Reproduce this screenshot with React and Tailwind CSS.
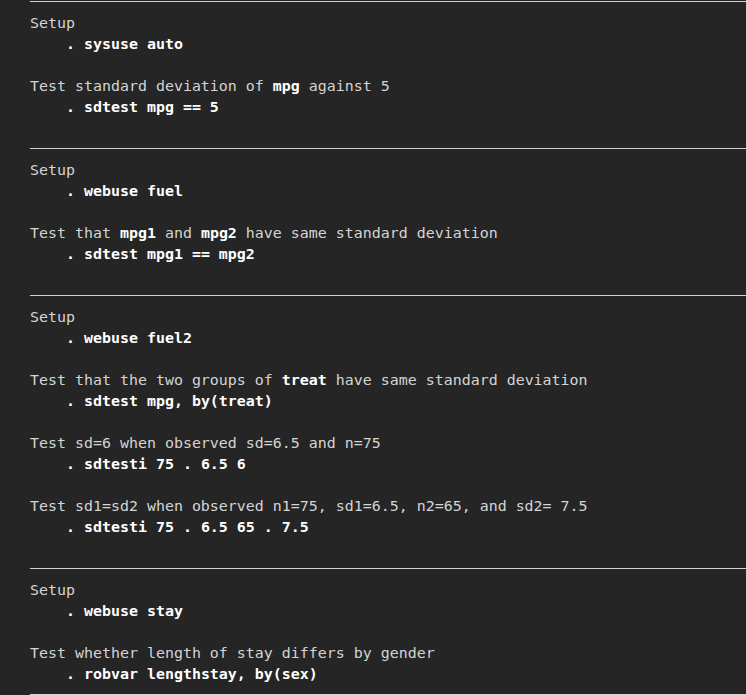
const sections = [
  [
    [["Setup"]],
    [["    "], [". sysuse auto", true]],
    [[""]],
    [["Test standard deviation of "], ["mpg", true], [" against 5"]],
    [["    "], [". sdtest mpg == 5", true]],
    [[""]],
  ],
  [
    [["Setup"]],
    [["    "], [". webuse fuel", true]],
    [[""]],
    [["Test that "], ["mpg1", true], [" and "], ["mpg2", true], [" have same standard deviation"]],
    [["    "], [". sdtest mpg1 == mpg2", true]],
    [[""]],
  ],
  [
    [["Setup"]],
    [["    "], [". webuse fuel2", true]],
    [[""]],
    [["Test that the two groups of "], ["treat", true], [" have same standard deviation"]],
    [["    "], [". sdtest mpg, by(treat)", true]],
    [[""]],
    [["Test sd=6 when observed sd=6.5 and n=75"]],
    [["    "], [". sdtesti 75 . 6.5 6", true]],
    [[""]],
    [["Test sd1=sd2 when observed n1=75, sd1=6.5, n2=65, and sd2= 7.5"]],
    [["    "], [". sdtesti 75 . 6.5 65 . 7.5", true]],
    [[""]],
  ],
  [
    [["Setup"]],
    [["    "], [". webuse stay", true]],
    [[""]],
    [["Test whether length of stay differs by gender"]],
    [["    "], [". robvar lengthstay, by(sex)", true]],
  ],
];

function Line({ parts }) {
  return (
    <div className="h-[21px] leading-[21px] whitespace-pre">
      {parts.map(([text, bold], i) =>
        bold ? (
          <span key={i} className="font-bold text-white">{text}</span>
        ) : (
          <span key={i}>{text || "\u00a0"}</span>
        )
      )}
    </div>
  );
}

export default function App() {
  return (
    <div
      className="min-h-[695px] w-[746px] overflow-hidden bg-[#252525] pt-px text-[14.95px] text-[#d4d4d4]"
      style={{ fontFamily: '"DejaVu Sans Mono", "Liberation Mono", monospace' }}
    >
      {sections.map((lines, s) => (
        <div key={s} className="ml-[30px] border-t border-[#d2d2d2] pt-[11px] pb-[9px]">
          {lines.map((parts, i) => (
            <Line key={i} parts={parts} />
          ))}
        </div>
      ))}
      <div className="ml-[30px] border-t border-[#d2d2d2]" />
    </div>
  );
}
